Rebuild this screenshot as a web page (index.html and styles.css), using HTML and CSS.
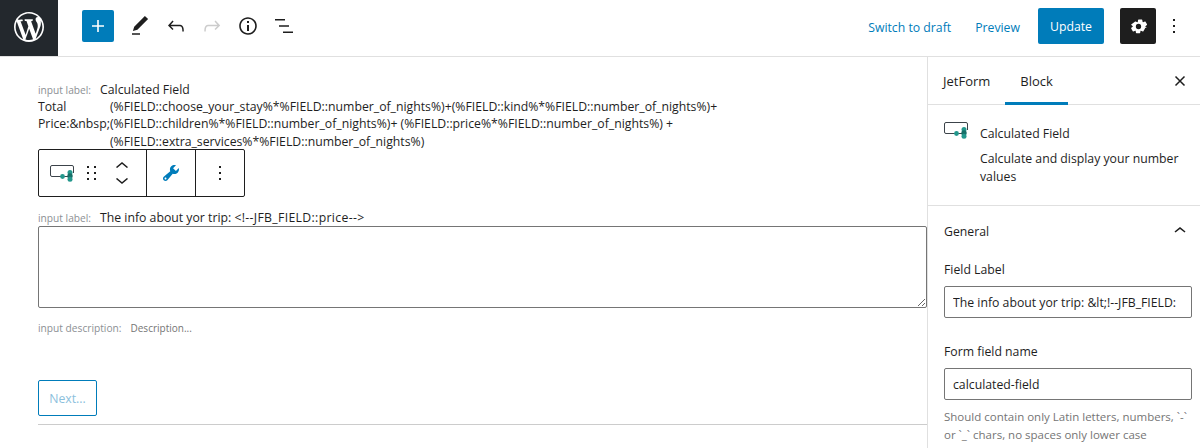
FILE: index.html
```html
<!DOCTYPE html>
<html lang="en">
<head>
<meta charset="utf-8">
<title>Edit form</title>
<link rel="stylesheet" href="styles.css">
</head>
<body>
<div class="app">
  <header class="topbar">
    <div class="logo">
      <svg viewBox="0 0 20 20" width="30" height="30"><path fill="#fff" d="M20 10c0-5.510-4.490-10-10-10C4.480 0 0 4.490 0 10c0 5.520 4.480 10 10 10 5.510 0 10-4.480 10-10zM7.780 15.370L4.370 6.220c.55-.02 1.170-.08 1.170-.08.5-.06.44-1.130-.06-1.110 0 0-1.450.11-2.370.11-.18 0-.37 0-.58-.01C4.120 2.690 6.890 1.030 10 1.030c2.320 0 4.430.87 6.030 2.340-.68-.11-1.650.39-1.650 1.580 0 .74.45 1.360.9 2.100.35.61.55 1.360.55 2.460 0 1.490-1.400 5-1.400 5l-3.030-8.370c.54-.02.82-.17.82-.17.5-.05.44-1.250-.06-1.220 0 0-1.440.12-2.380.12-.87 0-2.330-.12-2.330-.12-.5-.03-.56 1.200-.06 1.220l.92.08 1.260 3.410zM17.410 10c.24-.64.74-1.870.43-4.250.7 1.290 1.050 2.710 1.050 4.250 0 3.290-1.730 6.240-4.400 7.780.97-2.590 1.940-5.210 2.920-7.780zM6.100 18.090C3.120 16.650 1.110 13.530 1.110 10c0-1.300.23-2.480.72-3.590C3.250 10.300 4.670 14.200 6.100 18.090zm4.030-6.950l2.560 6.950c.01.04.03.08.05.11-.86.300-1.760.47-2.740.47-.81 0-1.610-.12-2.350-.34 0 0 2.480-7.190 2.480-7.190z"/></svg>
    </div>
    <div class="tools">
      <button class="add" type="button" aria-label="Add block"><svg viewBox="0 0 24 24" width="24" height="24"><path fill="#fff" d="M18 11.200h-5.200V6h-1.600v5.200H6v1.600h5.200V18h1.600v-5.200H18z"/></svg></button>
      <span class="tool"><svg viewBox="0 0 24 24" width="24" height="24"><path fill="#1e1e1e" d="M20.100 5.100L16.900 2 6.200 12.700l-1.300 4.400 4.500-1.300L20.100 5.100zM4 20.800h8v-1.500H4v1.500z"/></svg></span>
      <span class="tool"><svg viewBox="0 0 24 24" width="24" height="24"><path fill="#1e1e1e" d="M18.300 11.700c-.6-.6-1.400-.9-2.300-.9H6.700l2.900-3.300-1.100-1-4.500 5L8.500 16l1-1-2.700-2.700H16c.5 0 .9.200 1.300.5 1 1 1 3.400 1 4.500v.3h1.500v-.2c0-1.500 0-4.300-1.500-5.700z"/></svg></span>
      <span class="tool"><svg viewBox="0 0 24 24" width="24" height="24"><path fill="#ccc" d="M15.600 6.500l-1.100 1 2.900 3.300H8c-.9 0-1.700.3-2.300.9-1.400 1.500-1.400 4.200-1.400 5.600v.2h1.500v-.3c0-1.100 0-3.500 1-4.500.3-.3.700-.5 1.300-.5h9.200L14.500 15l1.100 1.100 4.600-4.600-4.600-5z"/></svg></span>
      <span class="tool"><svg viewBox="0 0 24 24" width="24" height="24"><path fill="#1e1e1e" d="M12 3.200c-4.800 0-8.800 3.900-8.800 8.800 0 4.800 3.900 8.800 8.800 8.800 4.800 0 8.800-3.900 8.800-8.800 0-4.800-4-8.800-8.800-8.800zm0 16c-4 0-7.200-3.300-7.200-7.200C4.800 8 8 4.800 12 4.800s7.200 3.300 7.200 7.200c0 4-3.200 7.200-7.200 7.200zM11 17h2v-6h-2v6zm0-8h2V7h-2v2z"/></svg></span>
      <span class="tool"><svg viewBox="0 0 24 24" width="24" height="24"><path fill="#1e1e1e" d="M3 5h10v1.500H3zM7 11.200h10v1.500H7zM11 17.500h10V19H11z"/></svg></span>
    </div>
    <div class="actions">
      <a class="link draft">Switch to draft</a>
      <a class="link preview">Preview</a>
      <button class="update" type="button">Update</button>
      <button class="settings" type="button" aria-label="Settings"><svg viewBox="4 4 16 16" width="17" height="17"><path fill="#fff" d="M19.900 13.300l-1.400-1.100v-.4l1.400-1.100c.2-.1.300-.4.200-.6l-1.500-2.600c-.1-.2-.4-.3-.6-.2l-1.700.7-.4-.2-.3-1.800c0-.2-.3-.5-.5-.5h-3c-.2 0-.5.200-.5.400l-.3 1.800-.4.300-1.700-.7c-.2-.1-.5 0-.6.200L5.100 10c-.1.200 0 .5.200.6l1.400 1.100v.4l-1.400 1.100c-.2.200-.3.400-.2.600l1.500 2.600c.1.200.4.300.6.200l1.700-.7.400.2.300 1.800c0 .2.300.4.500.4h3c.2 0 .5-.2.500-.4l.3-1.800.4-.2 1.700.7c.2.100.5 0 .6-.2l1.500-2.600c.1-.2 0-.5-.2-.6zM12 14.500a2.500 2.500 0 1 1 0-5 2.500 2.500 0 0 1 0 5z"/></svg></button>
      <span class="kebab"><svg viewBox="0 0 24 24" width="24" height="24"><path fill="#1e1e1e" d="M13 19h-2v-2h2v2zm0-6h-2v-2h2v2zm0-6h-2V5h2v2z"/></svg></span>
    </div>
  </header>
  <div class="body">
    <main class="canvas">
      <div class="label-row first"><span class="hint">input label:</span><span>Calculated Field</span></div>
      <div class="calc">
        <div class="calc-prefix">Total Price:&amp;nbsp;</div>
        <div class="calc-formula">(%FIELD::choose_your_stay%*%FIELD::number_of_nights%)+(%FIELD::kind%*%FIELD::number_of_nights%)+(%FIELD::children%*%FIELD::number_of_nights%)+ (%FIELD::price%*%FIELD::number_of_nights%) + (%FIELD::extra_services%*%FIELD::number_of_nights%)</div>
      </div>
      <div class="block-toolbar">
        <div class="tb-group tb-main">
          <svg class="calc-icon" viewBox="0 0 24 17" width="24" height="17"><path fill="none" stroke="#3c434a" stroke-width="1" d="M12 11.500H2A1.500 1.500 0 0 1 .5 10V2A1.500 1.500 0 0 1 2 .5h20A1.500 1.500 0 0 1 23.500 2v6"/><path stroke="#3c434a" d="M14 11.500h4"/><circle cx="12.500" cy="11.500" r="2.400" fill="#23978c"/><circle cx="20" cy="7.500" r="2.500" fill="#23978c"/><circle cx="20" cy="11" r="2.700" fill="#176f68"/><circle cx="20" cy="14.300" r="2.500" fill="#23978c"/></svg>
          <svg class="drag" viewBox="0 0 9 14" width="9" height="14"><path fill="#1e1e1e" d="M0 0h2v2H0zM7 0h2v2H7zM0 6h2v2H0zM7 6h2v2H7zM0 12h2v2H0zM7 12h2v2H7z"/></svg>
          <div class="movers">
            <svg viewBox="0 0 12 6" width="12" height="6"><path fill="none" stroke="#1e1e1e" stroke-width="1.500" d="M.5 5.500L6 1l5.500 4.500"/></svg>
            <svg viewBox="0 0 12 6" width="12" height="6"><path fill="none" stroke="#1e1e1e" stroke-width="1.500" d="M.5.500L6 5l5.500-4.500"/></svg>
          </div>
        </div>
        <div class="tb-group tb-wrench"><svg viewBox="0 0 20 20" width="20" height="20"><path fill="#007cba" d="M16.680 9.770c-1.340 1.340-3.300 1.670-4.950.99l-5.410 6.520c-.99.990-2.590.99-3.580 0s-.99-2.590 0-3.570l6.520-5.420c-.68-1.650-.35-3.610.99-4.950 1.280-1.280 3.120-1.620 4.720-1.060l-2.890 2.890 2.820 2.820 2.860-2.870c.53 1.590.18 3.410-1.080 4.650zM3.810 16.210c.4.390 1.030.39 1.420 0 .4-.39.400-1.030 0-1.420-.39-.39-1.020-.39-1.420 0-.39.390-.39 1.030 0 1.420z"/></svg></div>
        <div class="tb-group tb-more"><svg viewBox="0 0 24 24" width="24" height="24"><path fill="#1e1e1e" d="M13 19h-2v-2h2v2zm0-6h-2v-2h2v2zm0-6h-2V5h2v2z"/></svg></div>
      </div>
      <div class="label-row second"><span class="hint">input label:</span><span>The info about yor trip: <span class="tag">&lt;!--JFB_FIELD::price--&gt;</span></span></div>
      <textarea class="area" aria-label="Calculated field"></textarea>
      <div class="desc-row"><span class="hint">input description:</span><span class="desc-text">Description...</span></div>
      <button class="next" type="button">Next...</button>
      <hr class="rule">
    </main>
    <aside class="sidebar">
      <div class="tabs">
        <span class="tab">JetForm</span>
        <span class="tab active">Block</span>
        <svg class="close" viewBox="0 0 24 24" width="24" height="24"><path fill="none" stroke="#1e1e1e" stroke-width="1.500" d="M7.500 7.500l9 9M16.500 7.500l-9 9"/></svg>
      </div>
      <section class="card">
        <svg class="calc-icon" viewBox="0 0 24 17" width="24" height="17"><path fill="none" stroke="#3c434a" stroke-width="1" d="M12 11.500H2A1.500 1.500 0 0 1 .5 10V2A1.500 1.500 0 0 1 2 .5h20A1.500 1.500 0 0 1 23.500 2v6"/><path stroke="#3c434a" d="M14 11.500h4"/><circle cx="12.500" cy="11.500" r="2.400" fill="#23978c"/><circle cx="20" cy="7.500" r="2.500" fill="#23978c"/><circle cx="20" cy="11" r="2.700" fill="#176f68"/><circle cx="20" cy="14.300" r="2.500" fill="#23978c"/></svg>
        <div class="card-text">
          <div class="card-title">Calculated Field</div>
          <div class="card-desc">Calculate and display your number values</div>
        </div>
      </section>
      <section class="panel">
        <div class="panel-head"><span>General</span><svg viewBox="0 0 24 24" width="24" height="24"><path fill="#1e1e1e" d="M6.500 12.400L12 8l5.500 4.400-.9 1.200L12 10l-4.500 3.600-1-1.200z"/></svg></div>
        <label class="field-label" for="f1">Field Label</label>
        <input class="input" id="f1" type="text" value="The info about yor trip: &amp;lt;!--JFB_FIELD:">
        <label class="field-label name" for="f2">Form field name</label>
        <input class="input" id="f2" type="text" value="calculated-field">
        <p class="help">Should contain only Latin letters, numbers, `-` or `_` chars, no spaces only lower case</p>
      </section>
    </aside>
  </div>
</div>
</body>
</html>
```

FILE: styles.css
```css
* { box-sizing: border-box; }
html, body { margin: 0; height: 100%; overflow: hidden; }
body { font-family: "Open Sans", "Noto Sans", sans-serif; font-size: 12.25px; color: #1e1e1e; background: #fff; }
.app { width: 1200px; height: 448px; display: flex; flex-direction: column; overflow: hidden; }
button { font: inherit; border: 0; padding: 0; }

.topbar { height: 57px; flex: none; display: flex; align-items: flex-start; border-bottom: 1px solid #e0e0e0; }
.logo { width: 58px; height: 56px; background: #23282d; display: flex; align-items: center; justify-content: center; padding: 0 1px 2px 0; }
.tools { display: flex; align-items: center; height: 52px; margin-left: 24px; }
.add { width: 32px; height: 32px; background: #007cba; border-radius: 2px; display: flex; align-items: center; justify-content: center; margin-right: 8px; }
.tool { width: 36px; height: 36px; display: flex; align-items: center; justify-content: center; }
.actions { margin-left: auto; display: flex; align-items: center; height: 52px; }
.link { color: #007cba; padding-top: 2px; }
.draft { margin-right: 24px; }
.preview { margin-right: 18px; }
.update { width: 66px; height: 36px; background: #007cba; color: #fff; border-radius: 2px; margin-right: 16px; }
.settings { width: 36px; height: 36px; background: #1e1e1e; border-radius: 2px; display: flex; align-items: center; justify-content: center; }
.kebab { width: 24px; height: 36px; display: flex; align-items: center; justify-content: center; margin: 0 14px 0 6px; }

.body { flex: 1; display: flex; min-height: 0; }
.canvas { width: 928px; flex: none; border-right: 1px solid #e0e0e0; padding: 24px 0 0 38px; }
.hint { font-size: 10.2px; color: #8c8f94; margin-right: 9px; }
.label-row { line-height: 17px; height: 17px; }
.calc { display: flex; line-height: 17.4px; width: 700px; }
.calc-prefix { width: 72px; flex: none; }
.calc-formula { width: 625px; overflow-wrap: anywhere; }

.block-toolbar { display: flex; width: 207px; height: 48px; border: 1px solid #1e1e1e; border-radius: 2px; margin-top: -1px; background: #fff; }
.tb-group { display: flex; align-items: center; justify-content: center; height: 100%; }
.tb-main { width: 108px; border-right: 1px solid #1e1e1e; padding-left: 11px; justify-content: flex-start; }
.tb-main .drag { margin-left: 13px; }
.movers { display: flex; flex-direction: column; gap: 10px; margin-left: 20px; }
.movers svg { display: block; }
.tb-wrench { width: 49px; border-right: 1px solid #1e1e1e; }
.tb-more { flex: 1; }

.second { margin-top: 12px; }
.tag { letter-spacing: .33px; }
.area { display: block; width: 889px; height: 82px; margin-top: 0; border: 1px solid #757575; border-radius: 2px; background: #fff; }
.desc-row { margin-top: 12px; line-height: 16px; font-size: 10.2px; }
.desc-text { color: #757575; font-size: 10px; }
.next { display: block; width: 59px; height: 36px; margin-top: 44px; border: 1px solid #007cba; border-radius: 2px; background: #fff; color: #8cbfdd; }
.rule { width: 889px; height: 1px; margin: 8px 0 0; border: 0; background: #ccc; }

.sidebar { flex: 1; min-width: 0; }
.tabs { height: 48px; display: flex; align-items: center; border-bottom: 1px solid #e0e0e0; font-size: 13px; }
.tab { height: 48px; display: flex; align-items: center; padding: 0 15px; }
.tab.active { border-bottom: 3px solid #007cba; padding-top: 3px; }
.close { margin-left: auto; margin-right: 8px; margin-top: 1px; }
.card { display: flex; gap: 12px; padding: 16px; height: 101px; border-bottom: 1px solid #e0e0e0; }
.card .calc-icon { flex: none; margin-top: 1px; }
.card-text { padding: 1px 0 0 0; }
.card-title { font-weight: 500; line-height: 24px; }
.card-desc { line-height: 18px; margin-top: 4px; }
.panel { padding: 0 8px 0 16px; }
.panel-head { display: flex; justify-content: space-between; align-items: center; height: 50px; font-weight: 500; }
.field-label { display: block; line-height: 16px; margin-top: 6px; }
.input { display: block; height: 32px; margin-top: 8px; border: 1px solid #757575; border-radius: 2px; padding: 0 8px; width: 248px; font: inherit; color: #1e1e1e; background: #fff; }
.field-label.name { margin-top: 26px; }
.help { margin: 8px 0 0; font-size: 11.5px; line-height: 18px; color: #757575; }
```
